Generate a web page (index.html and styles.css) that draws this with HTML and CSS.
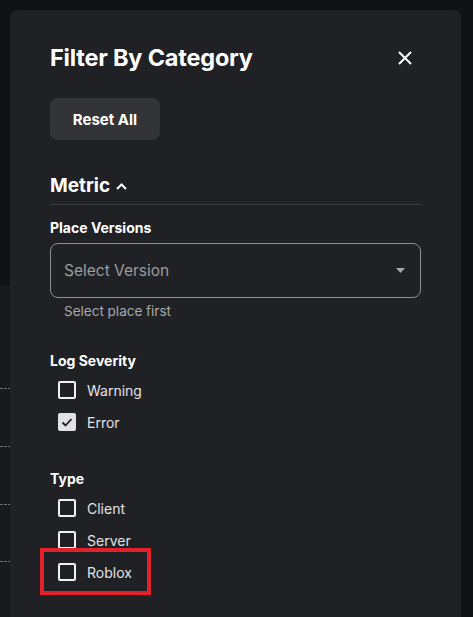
FILE: index.html
```html
<!DOCTYPE html>
<html lang="en">
<head>
    <meta charset="UTF-8">
    <meta name="viewport" content="width=device-width, initial-scale=1.0">
    <title>Filter By Category</title>
    <link rel="stylesheet" href="styles.css">
</head>
<body>
    <div class="drawer">
        <div class="drawer-header">
            <h2>Filter By Category</h2>
            <button class="close-btn" aria-label="Close">
                <svg width="14" height="14" viewBox="0 0 14 14">
                    <path d="M1 1 L13 13 M13 1 L1 13" stroke="#fff" stroke-width="2" fill="none"/>
                </svg>
            </button>
        </div>

        <button class="reset-btn">Reset All</button>

        <div class="section-title">
            Metric
            <svg width="11" height="7" viewBox="0 0 11 7">
                <path d="M1 6 L5.5 1.5 L10 6" stroke="#fff" stroke-width="2" fill="none"/>
            </svg>
        </div>

        <div class="group">
            <div class="group-label">Place Versions</div>
            <div class="select">
                <span>Select Version</span>
                <svg width="9" height="5" viewBox="0 0 9 5">
                    <path d="M0 0 L9 0 L4.5 5 Z" fill="#a7a8aa"/>
                </svg>
            </div>
            <div class="helper">Select place first</div>
        </div>

        <div class="group">
            <div class="group-label">Log Severity</div>
            <label class="check-row"><span class="box"></span>Warning</label>
            <label class="check-row">
                <span class="box checked">
                    <svg width="14" height="14" viewBox="0 0 14 14">
                        <path d="M2.5 7.5 L5.5 10.5 L11.5 4" stroke="#1e1f22" stroke-width="1.8" fill="none"/>
                    </svg>
                </span>Error
            </label>
        </div>

        <div class="group">
            <div class="group-label">Type</div>
            <label class="check-row"><span class="box"></span>Client</label>
            <label class="check-row"><span class="box"></span>Server</label>
            <label class="check-row highlight"><span class="box"></span>Roblox</label>
        </div>
    </div>
</body>
</html>
```

FILE: styles.css
```css
body {
    margin: 0;
    height: 617px;
    overflow: hidden;
    font-family: Inter, "Noto Sans", sans-serif;
    color: #fff;
    background-color: #111216;
    /* page behind the drawer: lower card and dashed chart grid lines */
    background-image:
        repeating-linear-gradient(to right, #6f7074 0 3px, transparent 3px 4px),
        repeating-linear-gradient(to right, #6f7074 0 3px, transparent 3px 4px),
        repeating-linear-gradient(to right, #6f7074 0 3px, transparent 3px 4px),
        repeating-linear-gradient(to right, #6f7074 0 3px, transparent 3px 4px),
        linear-gradient(#18191c, #18191c);
    background-size: 10px 1px, 10px 1px, 10px 1px, 10px 1px, 10px 332px;
    background-position: 0 388px, 0 446px, 0 504px, 0 561px, 0 285px;
    background-repeat: no-repeat;
}
.drawer {
    margin: 10px 0 0 10px;
    width: 451px;
    height: 607px;
    box-sizing: border-box;
    padding: 32px 40px 0 40px;
    background-color: #202125;
    border-radius: 8px 8px 0 0;
}
.drawer-header {
    display: flex;
    justify-content: space-between;
    align-items: center;
}
.drawer-header h2 {
    margin: 0;
    font-size: 23.5px;
    font-weight: 700;
    line-height: 32px;
    letter-spacing: -0.2px;
}
.close-btn {
    background: none;
    border: none;
    padding: 0;
    margin-right: 9px;
    width: 14px;
    height: 14px;
    display: flex;
    cursor: pointer;
}
.reset-btn {
    margin-top: 24px;
    width: 110px;
    height: 42px;
    border: none;
    border-radius: 8px;
    background-color: #333438;
    color: #fff;
    font-family: inherit;
    font-size: 15px;
    font-weight: 700;
    cursor: pointer;
}
.section-title {
    margin-top: 34px;
    padding-bottom: 6px;
    border-bottom: 1px solid #3a3b3f;
    font-size: 19px;
    font-weight: 700;
    line-height: 24px;
    display: flex;
    align-items: center;
    gap: 6px;
}
.section-title svg {
    margin-top: 1px;
}
.group {
    margin-top: 14px;
}
.group + .group {
    margin-top: 32px;
}
.group-label {
    font-size: 14px;
    font-weight: 700;
    line-height: 18px;
}
.select {
    margin-top: 6px;
    height: 55px;
    box-sizing: border-box;
    border: 1px solid #8d8e91;
    border-radius: 8px;
    padding: 0 15px 0 13px;
    display: flex;
    align-items: center;
    justify-content: space-between;
    color: #9b9c9f;
    font-size: 15.5px;
}
.helper {
    margin-top: 4px;
    padding-left: 14px;
    font-size: 13.5px;
    line-height: 18px;
    color: #a8a9ac;
}
.check-row {
    position: relative;
    display: flex;
    align-items: center;
    gap: 11px;
    height: 32px;
    padding-left: 8px;
    font-size: 14px;
    color: #e3e3e5;
}
.group-label + .check-row {
    margin-top: 4px;
}
.box {
    width: 18px;
    height: 18px;
    box-sizing: border-box;
    border: 2px solid #f2f2f2;
    border-radius: 2px;
    display: flex;
    align-items: center;
    justify-content: center;
}
.box.checked {
    border-color: #e2e2e4;
    background-color: #e2e2e4;
}
/* red marker drawn around a row */
.highlight::after {
    content: "";
    position: absolute;
    left: -10px;
    top: -8px;
    width: 111px;
    height: 47px;
    box-sizing: border-box;
    border: 4px solid #e4212b;
}
```
